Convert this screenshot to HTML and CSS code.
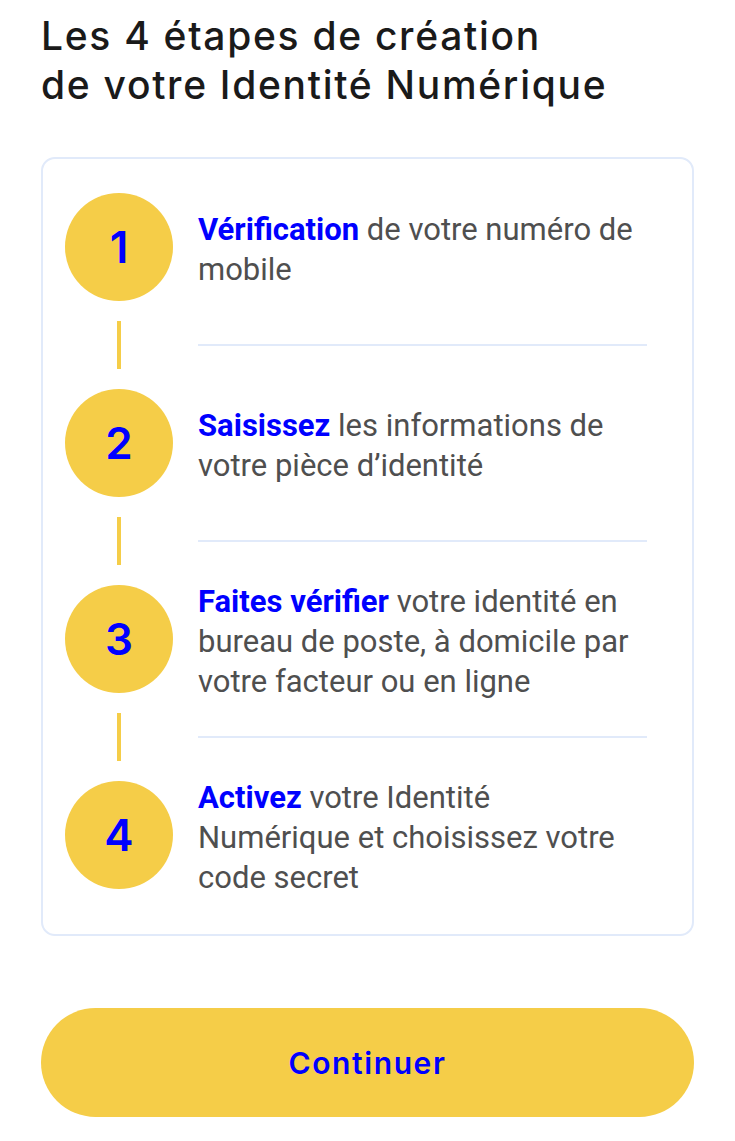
FILE: index.html
```html
<!DOCTYPE html>
<html lang="fr">
<head>
<meta charset="utf-8">
<title>Les 4 étapes</title>
<link rel="stylesheet" href="styles.css">
</head>
<body>
<main class="page">
  <h1 class="title">Les 4 étapes de création<br>de votre Identité Numérique</h1>
  <section class="card">
    <div class="step">
      <div class="num">1</div>
      <p class="text"><strong>Vérification</strong> de votre numéro de mobile</p>
    </div>
    <div class="sep"><span class="vline"></span><span class="hline"></span></div>
    <div class="step">
      <div class="num">2</div>
      <p class="text"><strong>Saisissez</strong> les informations de votre pièce d’identité</p>
    </div>
    <div class="sep"><span class="vline"></span><span class="hline"></span></div>
    <div class="step">
      <div class="num">3</div>
      <p class="text"><strong>Faites vérifier</strong> votre identité en bureau de poste, à domicile par votre facteur ou en ligne</p>
    </div>
    <div class="sep"><span class="vline"></span><span class="hline"></span></div>
    <div class="step">
      <div class="num">4</div>
      <p class="text"><strong>Activez</strong> votre Identité Numérique et choisissez votre code secret</p>
    </div>
  </section>
  <button class="btn" type="button">Continuer</button>
</main>
</body>
</html>
```

FILE: styles.css
```css
html, body {
  margin: 0;
  padding: 0;
  background: #ffffff;
}
.page {
  padding: 11px 41px 0 41px;
  display: flex;
  flex-direction: column;
}
.title {
  margin: 0;
  font-family: "Inter", "Noto Sans", sans-serif;
  font-weight: 500;
  font-size: 39px;
  line-height: 49px;
  color: #1a1a1a;
  letter-spacing: 1.7px;
}
.card {
  margin-top: 48px;
  border: 2px solid #e1eafa;
  border-radius: 14px;
  padding: 34px 45px 45px 22px;
  display: flex;
  flex-direction: column;
}
.step {
  display: flex;
  align-items: center;
  gap: 25px;
  height: 108px;
}
.num {
  flex: 0 0 108px;
  width: 108px;
  height: 108px;
  border-radius: 50%;
  background: #f5cd48;
  color: #0000ff;
  display: flex;
  align-items: center;
  justify-content: center;
  font-family: "Inter", "Noto Sans", sans-serif;
  font-weight: 600;
  font-size: 44px;
}
.text {
  margin: 0;
  padding-top: 6px;
  font-family: "Roboto", "Noto Sans", sans-serif;
  font-size: 31px;
  line-height: 40px;
  color: #4f4f4f;
}
.text strong {
  color: #0000ff;
  font-weight: 700;
}
.sep {
  height: 88px;
  display: flex;
  align-items: center;
  gap: 25px;
}
.vline {
  flex: 0 0 108px;
  height: 48px;
  display: flex;
  justify-content: center;
}
.vline::before {
  content: "";
  width: 4px;
  height: 48px;
  background: #f5cd48;
}
.hline {
  flex: 1;
  height: 2px;
  background: #e1eafa;
}
.btn {
  margin-top: 72px;
  height: 109px;
  border: none;
  border-radius: 55px;
  background: #f5cd48;
  color: #0000ff;
  font-family: "Inter", "Noto Sans", sans-serif;
  font-weight: 600;
  font-size: 30px;
  letter-spacing: 1.6px;
  cursor: pointer;
}
```
